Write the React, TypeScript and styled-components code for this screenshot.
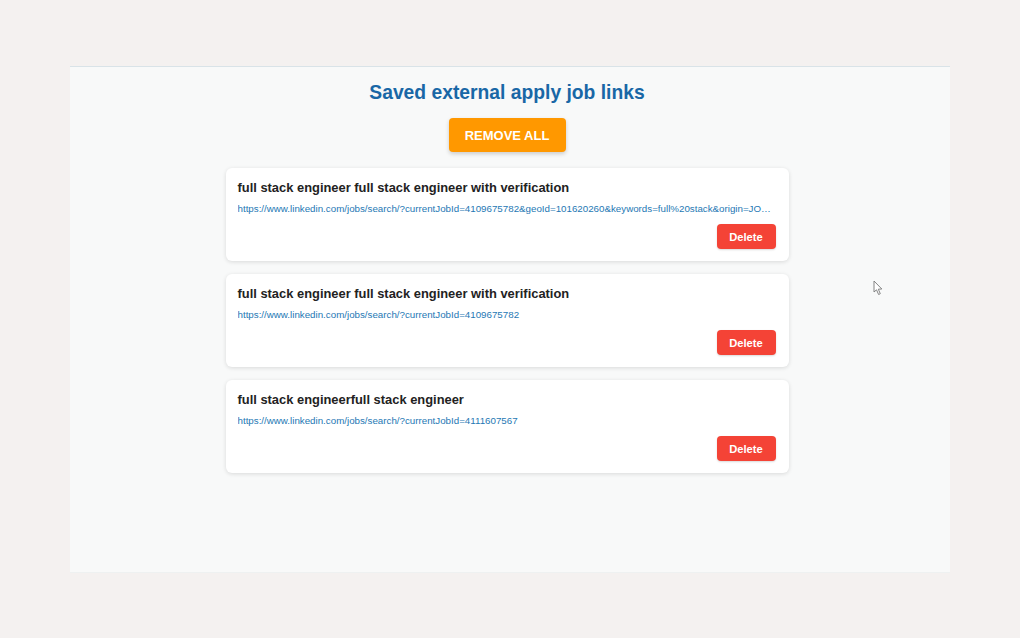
import React from 'react';
import styled, { createGlobalStyle } from 'styled-components';

const GlobalStyle = createGlobalStyle`
    html, body {
        margin: 0;
        padding: 0;
        background: #f4f1f0;
        font-family: "Liberation Sans", Arial, sans-serif;
    }
`;

const Page = styled.div`
    position: relative;
    width: 1020px;
    height: 638px;
    padding: 66px 70px 0;
    box-sizing: border-box;
`;

const Panel = styled.div`
    height: 507px;
    background: #f8f9f9;
    border-top: 1px solid #d9e3e8;
    border-bottom: 1px solid #eef1f1;
    box-sizing: border-box;
    display: flex;
    flex-direction: column;
    align-items: center;
    padding: 15px 6px 0 0;
`;

const Title = styled.h2`
    margin: 0;
    font-size: 19.3px;
    line-height: 22px;
    font-weight: bold;
    color: #1967a6;
`;

const RemoveAllButton = styled.button`
    margin-top: 14px;
    width: 117px;
    height: 34px;
    border: none;
    border-radius: 4px;
    background: #ff9800;
    color: #ffffff;
    font-family: inherit;
    font-size: 13px;
    font-weight: bold;
    box-shadow: 0 2px 4px rgba(0, 0, 0, 0.18);
    cursor: pointer;
`;

const List = styled.div`
    margin-top: 16px;
    width: 563px;
    display: flex;
    flex-direction: column;
    gap: 13px;
`;

const Card = styled.div`
    background: #ffffff;
    border-radius: 6px;
    box-shadow: 0 1px 4px rgba(0, 0, 0, 0.13);
    padding: 12px 13px 12px 12px;
    display: flex;
    flex-direction: column;
`;

const JobTitle = styled.div`
    font-size: 12.9px;
    line-height: 16px;
    font-weight: bold;
    color: #222222;
`;

const JobLink = styled.a`
    margin-top: 7px;
    font-size: 9.75px;
    line-height: 12px;
    color: #1e78b4;
    text-decoration: none;
    white-space: nowrap;
    overflow: hidden;
    text-overflow: ellipsis;
`;

const Actions = styled.div`
    margin-top: 9px;
    display: flex;
    justify-content: flex-end;
`;

const DeleteButton = styled.button`
    width: 59px;
    height: 25px;
    border: none;
    border-radius: 4px;
    background: #f44336;
    color: #ffffff;
    font-family: inherit;
    font-size: 11.2px;
    font-weight: bold;
    box-shadow: 0 1px 2px rgba(0, 0, 0, 0.15);
    cursor: pointer;
`;

const Cursor = styled.svg`
    position: absolute;
    left: 873px;
    top: 280px;
`;

const jobs = [
    {
        title: 'full stack engineer full stack engineer with verification',
        url: 'https://www.linkedin.com/jobs/search/?currentJobId=4109675782&geoId=101620260&keywords=full%20stack&origin=JOBS_HOME_SEARCH_BUTTON&refresh=true',
    },
    {
        title: 'full stack engineer full stack engineer with verification',
        url: 'https://www.linkedin.com/jobs/search/?currentJobId=4109675782',
    },
    {
        title: 'full stack engineerfull stack engineer',
        url: 'https://www.linkedin.com/jobs/search/?currentJobId=4111607567',
    },
];

export default function App() {
    return (
        <>
            <GlobalStyle />
            <Page>
                <Panel>
                    <Title>Saved external apply job links</Title>
                    <RemoveAllButton>REMOVE ALL</RemoveAllButton>
                    <List>
                        {jobs.map((job, i) => (
                            <Card key={i}>
                                <JobTitle>{job.title}</JobTitle>
                                <JobLink href={job.url}>{job.url}</JobLink>
                                <Actions>
                                    <DeleteButton>Delete</DeleteButton>
                                </Actions>
                            </Card>
                        ))}
                    </List>
                </Panel>
                <Cursor width="11" height="16" viewBox="0 0 11 16">
                    <path d="M1 1 L1 12 L3.5 9.8 L5.6 14.5 L7.3 13.7 L5.3 9.2 L8.8 9 Z" fill="#ffffff" stroke="#777" strokeWidth="0.9" strokeLinejoin="round" />
                </Cursor>
            </Page>
        </>
    );
}
